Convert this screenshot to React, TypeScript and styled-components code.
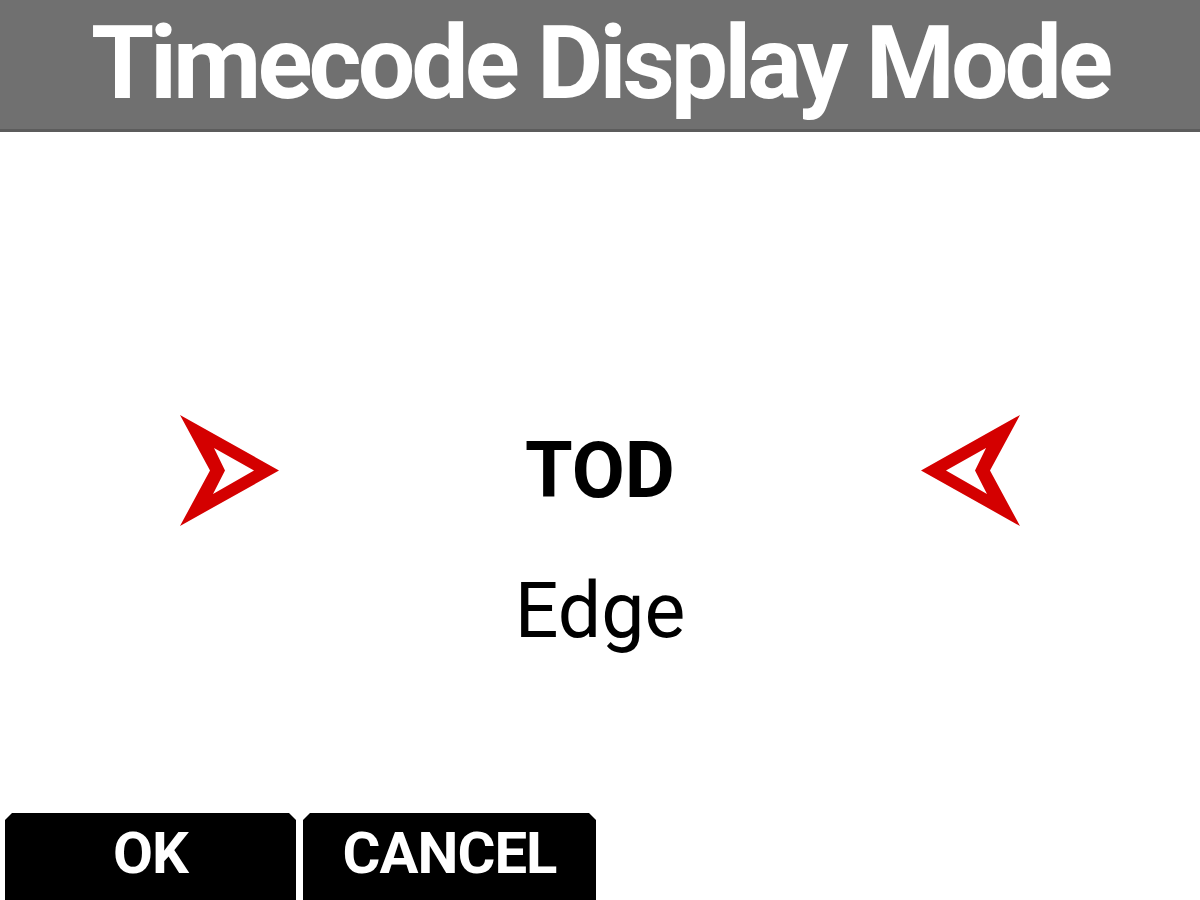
import React from 'react';
import styled, { createGlobalStyle } from 'styled-components';

const GlobalStyle = createGlobalStyle`
  html, body {
    margin: 0;
    padding: 0;
    background: #ffffff;
  }
  body {
    font-family: Roboto, "Liberation Sans", sans-serif;
  }
`;

const Screen = styled.div`
  display: flex;
  flex-direction: column;
  width: 1200px;
  height: 900px;
  overflow: hidden;
  background: #ffffff;
`;

const Header = styled.header`
  display: flex;
  justify-content: center;
  height: 132px;
  padding-top: 12px;
  box-sizing: border-box;
  background: #707070;
  border-bottom: 3px solid #5c5c5c;
`;

const Title = styled.h1`
  margin: 0;
  color: #ffffff;
  font-family: Roboto, "Liberation Sans", sans-serif;
  font-weight: 700;
  font-size: 102px;
  line-height: 102px;
  letter-spacing: -4px;
  white-space: nowrap;
`;

const Content = styled.main`
  display: flex;
  flex-direction: column;
  align-items: center;
  padding-top: 283px;
`;

const SelectorRow = styled.div`
  display: grid;
  grid-template-columns: 100px 640px 100px;
  align-items: center;
  justify-content: center;
`;

const Arrow = styled.svg<{ $flip?: boolean }>`
  display: block;
  width: 100px;
  height: 112px;
  transform: ${(p) => (p.$flip ? 'scaleX(-1)' : 'none')};
`;

const Option = styled.div<{ $selected?: boolean }>`
  text-align: center;
  color: #000000;
  font-family: Roboto, "Liberation Sans", sans-serif;
  font-size: 77px;
  line-height: 1;
  font-weight: ${(p) => (p.$selected ? 700 : 400)};
`;

const NextOption = styled(Option)`
  margin-top: 46px;
`;

const ButtonBar = styled.footer`
  display: flex;
  gap: 7px;
  margin-top: auto;
  padding-left: 5px;
`;

const SoftKey = styled.div<{ $width: number }>`
  width: ${(p) => p.$width}px;
  height: 87px;
  padding-top: 11px;
  box-sizing: border-box;
  background: #000000;
  color: #ffffff;
  text-align: center;
  font-family: Roboto, "Liberation Sans", sans-serif;
  font-weight: 700;
  font-size: 58px;
  line-height: 1;
  letter-spacing: -1px;
  clip-path: polygon(7px 0, calc(100% - 7px) 0, 100% 7px, 100% 100%, 0 100%, 0 7px);
`;

const arrowPath =
  'M0 0 L99 55.5 L0 111 L30 55.5 Z M34 33 L45 55.5 L33 79 L74 55.5 Z';

const PointerArrow = ({ flip }: { flip?: boolean }) => (
  <Arrow $flip={flip} viewBox="0 0 100 112">
    <path d={arrowPath} fill="#d40000" fillRule="evenodd" />
  </Arrow>
);

export default function App() {
  return (
    <>
      <GlobalStyle />
      <Screen>
        <Header>
          <Title>Timecode Display Mode</Title>
        </Header>
        <Content>
          <SelectorRow>
            <PointerArrow />
            <Option $selected>TOD</Option>
            <PointerArrow flip />
          </SelectorRow>
          <NextOption>Edge</NextOption>
        </Content>
        <ButtonBar>
          <SoftKey $width={291}>OK</SoftKey>
          <SoftKey $width={293}>CANCEL</SoftKey>
        </ButtonBar>
      </Screen>
    </>
  );
}
